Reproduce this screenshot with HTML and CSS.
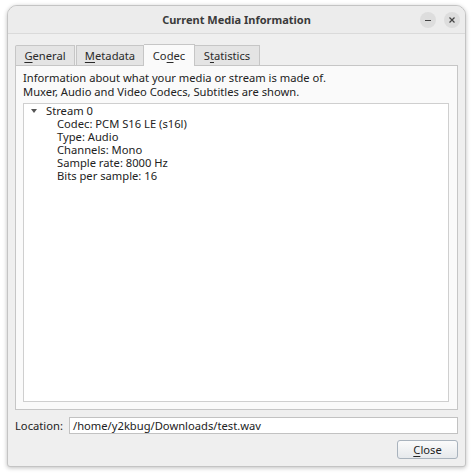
FILE: index.html
```html
<!DOCTYPE html>
<html>
<head>
<meta charset="utf-8">
<link rel="stylesheet" href="styles.css">
</head>
<body>
<div class="window">
  <div class="titlebar">
    <div class="title">Current Media Information</div>
    <div class="wbtns">
      <span class="wbtn"><svg width="16" height="16" viewBox="0 0 16 16"><path d="M5 8.5h6" stroke="#444" stroke-width="1.2"/></svg></span>
      <span class="wbtn"><svg width="16" height="16" viewBox="0 0 16 16"><path d="M5.5 5.5l5 5M10.5 5.5l-5 5" stroke="#444" stroke-width="1.2"/></svg></span>
    </div>
  </div>
  <div class="content">
    <div class="tabs">
      <div class="tab t-general"><u>G</u>eneral</div>
      <div class="tab t-meta"><u>M</u>etadata</div>
      <div class="tab t-codec active">Co<u>d</u>ec</div>
      <div class="tab t-stats">S<u>t</u>atistics</div>
    </div>
    <div class="panel">
      <div class="desc">Information about what your media or stream is made of.<br>Muxer, Audio and Video Codecs, Subtitles are shown.</div>
      <div class="tree">
        <div class="row root"><span class="arrow"></span>Stream 0</div>
        <div class="row child">Codec: PCM S16 LE (s16l)</div>
        <div class="row child">Type: Audio</div>
        <div class="row child">Channels: Mono</div>
        <div class="row child">Sample rate: 8000 Hz</div>
        <div class="row child">Bits per sample: 16</div>
      </div>
    </div>
    <div class="locrow">
      <span class="loclabel">Location:</span>
      <div class="locinput">/home/y2kbug/Downloads/test.wav</div>
    </div>
    <div class="btnrow">
      <div class="button"><u>C</u>lose</div>
    </div>
  </div>
</div>
</body>
</html>
```

FILE: styles.css
```css
* { box-sizing: border-box; }
html, body { margin: 0; background: #ffffff; }
body {
  padding: 5px 8px 8px 7px;
  font-family: "Noto Sans", "DejaVu Sans", sans-serif;
  font-size: 11.2px;
  color: #222222;
}
u { text-decoration-thickness: 1px; text-underline-offset: 2px; }
.window {
  width: 459px;
  height: 462px;
  border: 1px solid #c4c4c4;
  border-radius: 10px 10px 3px 3px;
  background: #efefef;
  box-shadow: 0 1px 4px rgba(0,0,0,0.25);
  display: flex;
  flex-direction: column;
  overflow: hidden;
}
.titlebar {
  height: 28px;
  flex: none;
  border-bottom: 1px solid #dadada;
  background: #ececec;
  display: flex;
  align-items: center;
  justify-content: center;
  position: relative;
}
.title {
  font-weight: bold;
  font-size: 11px;
  color: #3a3a3a;
}
.wbtns {
  position: absolute;
  right: 5px;
  top: 6px;
  display: flex;
  gap: 8px;
}
.wbtn {
  width: 16px;
  height: 16px;
  border-radius: 50%;
  background: #dddddd;
  display: flex;
}
.content {
  flex: 1;
  display: flex;
  flex-direction: column;
  padding: 10px 7px 7px 7px;
}
.tabs {
  display: flex;
  align-items: flex-end;
  height: 21px;
  flex: none;
}
.tab {
  height: 20px;
  border: 1px solid #c6c6c6;
  border-bottom: none;
  background: #e4e4e4;
  display: flex;
  align-items: center;
  justify-content: center;
  color: #2a2a2a;
}
.t-general { width: 60px; margin-right: 1px; border-radius: 2px 0 0 0; }
.t-meta { width: 68px; }
.t-codec { width: 51px; }
.t-stats { width: 65px; border-left: none; }
.tab.active {
  background: #fafafa;
  border-left: none;
  position: relative;
  top: 1px;
  height: 22px;
  z-index: 1;
}
.panel {
  flex: 1;
  border: 1px solid #c6c6c6;
  background: #fafafa;
  padding: 5px 8px 7px 7px;
  display: flex;
  flex-direction: column;
}
.desc {
  line-height: 14px;
}
.tree {
  margin-top: 4px;
  flex: 1;
  background: #ffffff;
  border: 1px solid #cfcfcf;
}
.row {
  height: 13px;
  line-height: 13px;
  white-space: nowrap;
}
.root {
  padding-left: 5px;
  display: flex;
  align-items: center;
}
.arrow {
  width: 0;
  height: 0;
  border-left: 3px solid transparent;
  border-right: 3px solid transparent;
  border-top: 4px solid #555;
  margin-right: 9px;
  margin-left: 2px;
}
.child { padding-left: 33px; }
.locrow {
  display: flex;
  align-items: center;
  margin-top: 7px;
  height: 17px;
}
.loclabel { width: 54px; }
.locinput {
  flex: 1;
  height: 17px;
  border: 1px solid #c2c2c2;
  background: #ffffff;
  padding-left: 3px;
  line-height: 15px;
}
.btnrow {
  display: flex;
  justify-content: flex-end;
  margin-top: 6px;
}
.button {
  width: 61px;
  height: 19px;
  border: 1px solid #a9b3bd;
  border-radius: 3px;
  background: linear-gradient(#fbfbfb, #e6e9ec);
  display: flex;
  align-items: center;
  justify-content: center;
}
```
